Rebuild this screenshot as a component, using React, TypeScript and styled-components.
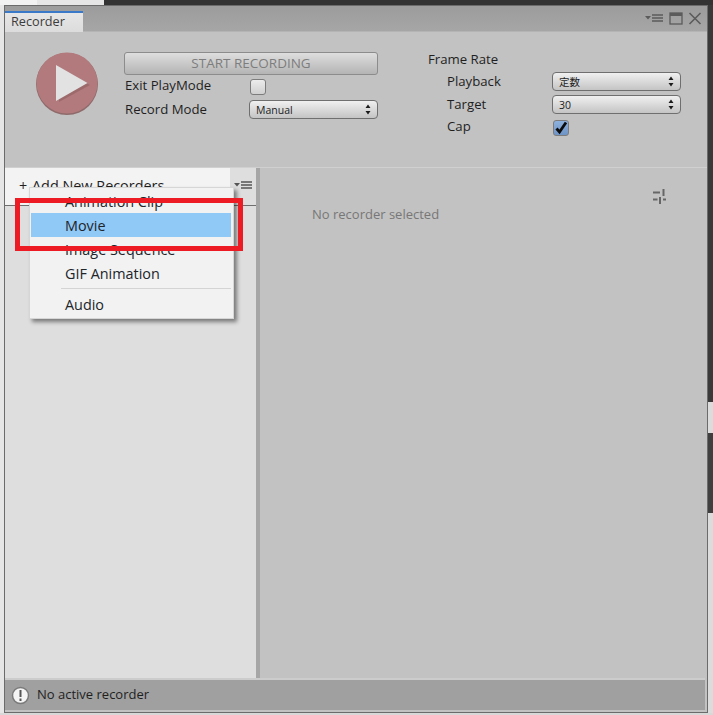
import { createGlobalStyle, styled } from "styled-components";

const GlobalStyle = createGlobalStyle`
  html, body {
    margin: 0;
    padding: 0;
    background: #393939;
  }
  * {
    box-sizing: border-box;
  }
`;

const FONT = `"Open Sans", "Noto Sans", "Noto Sans CJK JP", sans-serif`;

const Page = styled.div`
  width: 713px;
  height: 715px;
  display: flex;
  flex-direction: column;
  overflow: hidden;
  font-family: ${FONT};
  font-size: 13px;
  color: #1f1f1f;
`;

const TopStrip = styled.div`
  height: 5px;
  flex: none;
  display: flex;
`;

const StripPart = styled.div<{ $w: number; $c: string }>`
  width: ${(p) => p.$w}px;
  background: ${(p) => p.$c};
`;

const Middle = styled.div`
  flex: 1;
  display: flex;
  min-height: 0;
`;

const LeftEdge = styled.div`
  width: 4px;
  flex: none;
  background: #e6e6e6;
`;

const RightEdge = styled.div`
  width: 5px;
  flex: none;
  display: flex;
  flex-direction: column;
`;

const EdgePart = styled.div<{ $h?: number; $c: string }>`
  height: ${(p) => (p.$h ? `${p.$h}px` : "auto")};
  flex: ${(p) => (p.$h ? "none" : 1)};
  background: ${(p) => p.$c};
`;

const BottomStrip = styled.div`
  height: 2px;
  flex: none;
  background: #d8d8d8;
`;

const Window = styled.div`
  position: relative;
  width: 704px;
  flex: none;
  display: flex;
  flex-direction: column;
  border: 1px solid #6b6b6b;
  background: #c2c2c2;
`;

const TabBar = styled.div`
  height: 26px;
  flex: none;
  display: flex;
  align-items: flex-end;
  justify-content: space-between;
  background: linear-gradient(#9c9c9c, #a6a6a6);
  border-bottom: 1px solid #b4b4b4;
`;

const Tab = styled.div`
  width: 78px;
  height: 21px;
  margin-bottom: -1px;
  padding-left: 6px;
  border-top: 2px solid #3a78c8;
  background: linear-gradient(#e6e6e6, #dcdcdc);
  font-size: 12.7px;
  line-height: 17px;
  color: #3c3c3c;
`;

const WindowTools = styled.div`
  display: flex;
  align-items: center;
  gap: 6px;
  padding: 0 5px 6px 0;
  color: #5b5b5b;
`;

const TopPanel = styled.div`
  height: 136px;
  flex: none;
  display: flex;
  padding: 17px 0 0 30px;
  border-bottom: 1px solid #d0d0d0;
`;

const PlayWrap = styled.div`
  width: 66px;
  height: 66px;
  flex: none;
  margin: 1px 23px 0 0;
`;

const Controls = styled.div`
  width: 254px;
  flex: none;
  margin-top: 3px;
  margin-right: 50px;
  display: flex;
  flex-direction: column;
  gap: 4px;
`;

const StartButton = styled.div`
  height: 23px;
  margin-bottom: -2px;
  border: 1px solid #8c8c8c;
  border-radius: 3px;
  background: linear-gradient(#dedede, #b4b4b4);
  color: #7d7d7d;
  font-size: 13.5px;
  line-height: 20px;
  text-align: center;
`;

const Row = styled.div`
  height: 19px;
  display: flex;
  align-items: center;
`;

const RowLabel = styled.div<{ $w: number; $indent?: number; $lift?: number }>`
  width: ${(p) => p.$w}px;
  margin-left: ${(p) => p.$indent ?? 0}px;
  padding-bottom: ${(p) => p.$lift ?? 2}px;
  flex: none;
  font-size: 13.2px;
  white-space: nowrap;
`;

const SelectBox = styled.div<{ $w: number }>`
  width: ${(p) => p.$w}px;
  height: 19px;
  display: flex;
  align-items: center;
  justify-content: space-between;
  padding: 0 6px;
  border: 1px solid #6f6f6f;
  border-radius: 4px;
  background: linear-gradient(#f0f0f0, #c4c4c4);
  font-size: 10.5px;
  color: #1c1c1c;
`;

const Checkbox = styled.div<{ $on?: boolean }>`
  width: 16px;
  height: 16px;
  margin-left: ${(p) => (p.$on ? 0 : 1)}px;
  display: flex;
  align-items: center;
  justify-content: center;
  border: 1px solid #7c7c7c;
  border-radius: 3px;
  background: ${(p) =>
    p.$on ? "linear-gradient(#8eb2de, #6e94c6)" : "linear-gradient(#ececec, #d0d0d0)"};
`;

const FrameColumn = styled.div`
  width: 253px;
  flex: none;
  display: flex;
  flex-direction: column;
  gap: 4px;
`;

const Body = styled.div`
  flex: 1;
  display: flex;
  min-height: 0;
`;

const SidePanel = styled.div`
  width: 251px;
  flex: none;
  background: #dedede;
`;

const SideHeader = styled.div`
  height: 38px;
  display: flex;
  justify-content: space-between;
  border-bottom: 1px solid #6e6e6e;
`;

const SideHeaderTitle = styled.div`
  flex: 1;
  display: flex;
  padding: 8px 0 0 14px;
  background: #f3f3f3;
  font-size: 14.4px;
  white-space: nowrap;
`;

const PlusSign = styled.span`
  width: 13px;
  flex: none;
`;

const SideHeaderTools = styled.div`
  width: 26px;
  padding: 8px 0 0 4px;
`;

const Splitter = styled.div`
  width: 4px;
  flex: none;
  background: #a6a6a6;
`;

const MainPanel = styled.div`
  flex: 1;
  display: flex;
  justify-content: space-between;
  padding: 21px 41px 0 52px;
  background: #c2c2c2;
`;

const EmptyText = styled.div`
  margin-top: 16px;
  font-size: 13px;
  color: #777777;
`;

const StatusBar = styled.div`
  height: 32px;
  flex: none;
  display: flex;
  align-items: center;
  gap: 7px;
  padding: 0 6px;
  margin: 0 2px 2px 0;
  border-top: 2px solid #cccccc;
  background: #a0a0a0;
  font-size: 13px;
  color: #1f1f1f;
`;

const StatusText = styled.span`
  padding-bottom: 2px;
`;

const Menu = styled.div`
  position: absolute;
  left: 24px;
  top: 181px;
  width: 205px;
  height: 132px;
  padding: 1px 2px 1px 1px;
  background: #f2f2f2;
  border: 1px solid #d6d6d6;
  box-shadow: 3px 3px 4px rgba(0, 0, 0, 0.45);
`;

const MenuItem = styled.div<{ $active?: boolean }>`
  height: 24px;
  padding-left: 34px;
  line-height: 26px;
  font-size: 14.4px;
  color: #20252b;
  background: ${(p) => (p.$active ? "#90c8f6" : "transparent")};
`;

const MenuRule = styled.div`
  height: 1px;
  margin: 3px 0 3px 30px;
  background: #d4d4d4;
`;

const Callout = styled.div`
  position: absolute;
  left: 10px;
  top: 192px;
  width: 228px;
  height: 53px;
  border: 5px solid #ed1c24;
`;

const Stepper = () => (
  <svg width="6" height="11" viewBox="0 0 6 11">
    <path d="M3 0.5 L5.5 4 H0.5 Z M3 10.5 L5.5 7 H0.5 Z" fill="#1c1c1c" />
  </svg>
);

const MenuLines = ({ color }: { color: string }) => (
  <svg width="18" height="9" viewBox="0 0 18 9">
    <path d="M0 2 H6 L3 5.5 Z" fill={color} />
    <path d="M7 1 H18 M7 4 H18 M7 7 H18" stroke={color} strokeWidth="1.4" />
  </svg>
);

export default function App() {
  return (
    <Page>
      <GlobalStyle />
      <TopStrip>
        <StripPart $w={37} $c="#f2f2f2" />
        <StripPart $w={67} $c="#e6e6e6" />
        <StripPart $w={609} $c="#333333" />
      </TopStrip>
      <Middle>
        <LeftEdge />
        <Window>
          <TabBar>
            <Tab>Recorder</Tab>
            <WindowTools>
              <MenuLines color="#5b5b5b" />
              <svg width="14" height="13" viewBox="0 0 14 13">
                <rect x="1" y="1" width="12" height="11" fill="none" stroke="#5b5b5b" strokeWidth="1.3" />
                <rect x="1" y="1" width="12" height="3" fill="#5b5b5b" />
              </svg>
              <svg width="14" height="13" viewBox="0 0 14 13" style={{ marginLeft: -1 }}>
                <path d="M1.5 1 L12.5 12 M12.5 1 L1.5 12" stroke="#5b5b5b" strokeWidth="1.6" />
              </svg>
            </WindowTools>
          </TabBar>
          <TopPanel>
            <PlayWrap>
              <svg width="66" height="66" viewBox="0 0 66 66">
                <circle cx="32" cy="34" r="31" fill="#8f6a6b" />
                <circle cx="32" cy="33" r="30.5" fill="#b27a7c" />
                <path d="M24 18 L55 35 L24 52 Z" fill="#8f5f60" opacity="0.6" />
                <path d="M21 15 L52.5 33 L21 51 Z" fill="#e2e2e2" />
              </svg>
            </PlayWrap>
            <Controls>
              <StartButton>START RECORDING</StartButton>
              <Row>
                <RowLabel $w={124} $indent={1} $lift={3}>Exit PlayMode</RowLabel>
                <Checkbox />
              </Row>
              <Row>
                <RowLabel $w={124} $indent={1} $lift={1}>Record Mode</RowLabel>
                <SelectBox $w={129}>
                  Manual
                  <Stepper />
                </SelectBox>
              </Row>
            </Controls>
            <FrameColumn>
              <Row>
                <RowLabel $w={124} $lift={0}>Frame Rate</RowLabel>
              </Row>
              <Row>
                <RowLabel $w={105} $indent={19}>Playback</RowLabel>
                <SelectBox $w={129}>
                  定数
                  <Stepper />
                </SelectBox>
              </Row>
              <Row>
                <RowLabel $w={105} $indent={19}>Target</RowLabel>
                <SelectBox $w={129}>
                  30
                  <Stepper />
                </SelectBox>
              </Row>
              <Row>
                <RowLabel $w={106} $indent={19} $lift={3}>Cap</RowLabel>
                <Checkbox $on>
                  <svg width="14" height="14" viewBox="0 0 14 14">
                    <path d="M2.5 7.5 L5.5 11 L12 1.5" fill="none" stroke="#0c0c0c" strokeWidth="2.8" />
                  </svg>
                </Checkbox>
              </Row>
            </FrameColumn>
          </TopPanel>
          <Body>
            <SidePanel>
              <SideHeader>
                <SideHeaderTitle>
                  <PlusSign>+</PlusSign>
                  Add New Recorders
                </SideHeaderTitle>
                <SideHeaderTools>
                  <MenuLines color="#555555" />
                </SideHeaderTools>
              </SideHeader>
            </SidePanel>
            <Splitter />
            <MainPanel>
              <EmptyText>No recorder selected</EmptyText>
              <svg width="13" height="15" viewBox="0 0 13 15">
                <path d="M0 3.5 H7 M0 10.5 H4.5 M10 10.5 H13" stroke="#666666" strokeWidth="2" />
                <path d="M10.5 0 V7 M7 8 V15" stroke="#666666" strokeWidth="2" />
              </svg>
            </MainPanel>
          </Body>
          <StatusBar>
            <svg width="19" height="19" viewBox="0 0 19 19">
              <circle cx="9.5" cy="9.5" r="8" fill="#f4f4f4" stroke="#7a7a7a" strokeWidth="1.5" />
              <path d="M9.5 4 V11 M9.5 12.5 V15" stroke="#555555" strokeWidth="2" />
            </svg>
            <StatusText>No active recorder</StatusText>
          </StatusBar>
          <Menu>
            <MenuItem>Animation Clip</MenuItem>
            <MenuItem $active>Movie</MenuItem>
            <MenuItem>Image Sequence</MenuItem>
            <MenuItem>GIF Animation</MenuItem>
            <MenuRule />
            <MenuItem>Audio</MenuItem>
          </Menu>
          <Callout />
        </Window>
        <RightEdge>
          <EdgePart $h={397} $c="#393939" />
          <EdgePart $h={31} $c="#dcdcdc" />
          <EdgePart $h={80} $c="#3f3f3f" />
          <EdgePart $c="#dcdcdc" />
        </RightEdge>
      </Middle>
      <BottomStrip />
    </Page>
  );
}
